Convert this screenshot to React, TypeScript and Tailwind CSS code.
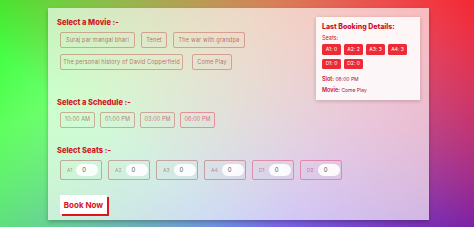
import React from 'react';

const movieRows = [
  [
    { title: 'Suraj par mangal bhari', w: 'w-[75px]' },
    { title: 'Tenet', w: 'w-[26px]' },
    { title: 'The war with grandpa', w: 'w-[72px]' },
  ],
  [
    { title: 'The personal history of David Copperfield', w: 'w-[123px]' },
    { title: 'Come Play', w: 'w-[40px]' },
  ],
];
const slots = ['10:00 AM', '01:00 PM', '03:00 PM', '06:00 PM'];
const seats = ['A1', 'A2', 'A3', 'A4', 'D1', 'D2'];
const booked = [
  { seat: 'A1', count: 0 },
  { seat: 'A2', count: 2 },
  { seat: 'A3', count: 3 },
  { seat: 'A4', count: 3 },
  { seat: 'D1', count: 0 },
  { seat: 'D2', count: 0 },
];

function Heading({ children }: { children: React.ReactNode }) {
  return <h3 className="text-[7.5px] font-extrabold leading-[10px] text-[#d4141c]">{children}</h3>;
}

export default function App() {
  return (
    <main
      className="min-h-[227px] bg-[linear-gradient(217deg,rgba(255,0,0,.8),rgba(255,0,0,0)_70.71%),linear-gradient(127deg,rgba(0,255,0,.8),rgba(0,255,0,0)_70.71%),linear-gradient(336deg,rgba(0,0,255,.8),rgba(0,0,255,0)_70.71%)] py-[8px]"
      style={{ fontFamily: 'Inter, "Noto Sans", sans-serif' }}
    >
      <div className="relative ml-[48px] w-[381px] bg-white/65 pb-[6px] pl-[9px] pt-[9.5px] shadow-[0_2px_4px_rgba(0,0,0,0.25)]">
        <section>
          <Heading>Select a Movie :-</Heading>
          <div className="mt-[4px] flex flex-col gap-[6px] pl-[3px]">
            {movieRows.map((row, i) => (
              <div key={i} className={`flex ${i === 0 ? 'gap-[6px]' : 'gap-[9px]'}`}>
                {row.map((m) => (
                  <button
                    key={m.title}
                    className={`${m.w} h-[16px] whitespace-nowrap rounded-[2px] border border-[rgba(190,80,80,0.45)] text-[5.7px] leading-none tracking-[0.1px] text-[rgba(170,70,70,0.75)]`}
                  >
                    {m.title}
                  </button>
                ))}
              </div>
            ))}
          </div>
        </section>

        <section className="mt-[28.5px]">
          <Heading>Select a Schedule :-</Heading>
          <div className="mt-[4px] flex gap-[5px] pl-[3px]">
            {slots.map((s) => (
              <button
                key={s}
                className={`h-[16px] w-[35px] rounded-[2px] border text-[5.5px] leading-none tracking-[0.1px] ${
                  s === '06:00 PM'
                    ? 'border-[rgba(235,60,90,0.5)] text-[rgba(220,60,90,0.75)]'
                    : 'border-[rgba(190,80,80,0.45)] text-[rgba(170,70,70,0.7)]'
                }`}
              >
                {s}
              </button>
            ))}
          </div>
        </section>

        <section className="mt-[18px]">
          <Heading>Select Seats :-</Heading>
          <div className="mt-[4px] flex gap-[6px] pl-[3px]">
            {seats.map((s) => (
              <div
                key={s}
                className={`flex h-[20px] w-[42px] items-center gap-[4px] rounded-[2px] border pl-[6px] ${
                  s.startsWith('D') ? 'border-[rgba(225,70,110,0.5)]' : 'border-[rgba(170,80,80,0.45)]'
                }`}
              >
                <span
                  className={`text-[5px] leading-none ${s.startsWith('D') ? 'text-[rgba(210,60,100,0.7)]' : 'text-[rgba(150,80,80,0.6)]'}`}
                >
                  {s}
                </span>
                <span className="flex h-[12px] w-[22px] items-center rounded-full bg-white/90 pl-[6px] text-[6px] leading-none text-[#555]">
                  0
                </span>
              </div>
            ))}
          </div>
        </section>

        <button className="ml-[3px] mt-[15px] flex h-[19px] w-[47px] items-center justify-center bg-white text-[8px] font-bold text-[#d8101c] shadow-[2px_2px_0_#e0141e]">
          Book Now
        </button>

        <aside className="absolute right-[9px] top-[9px] h-[83px] w-[104px] bg-white/85 px-[6px] pt-[5px] shadow-[0_1px_4px_rgba(0,0,0,0.2)]">
          <h4 className="text-[7px] font-extrabold leading-[9px] text-[#c8102e]">Last Booking Details:</h4>
          <p className="mt-[4px] text-[5.5px] leading-[7px] text-[#c8102e]">Seats:</p>
          <div className="mt-[2px] flex w-[90px] flex-wrap gap-x-[3px] gap-y-[4px]">
            {booked.map((b) => (
              <span
                key={b.seat}
                className="flex h-[10.5px] w-[19px] items-center justify-center rounded-[1.5px] bg-[#ee2a36] text-[5px] leading-none text-white"
              >
                {b.seat}: {b.count}
              </span>
            ))}
          </div>
          <p className="mt-[7px] text-[5px] leading-[7px] text-[#a02030]">
            <span className="text-[5.5px] font-semibold text-[#c8102e]">Slot:</span> 06:00 PM
          </p>
          <p className="mt-[4px] text-[5px] leading-[7px] text-[#a02030]">
            <span className="text-[5.5px] font-semibold text-[#c8102e]">Movie:</span> Come Play
          </p>
        </aside>
      </div>
    </main>
  );
}
